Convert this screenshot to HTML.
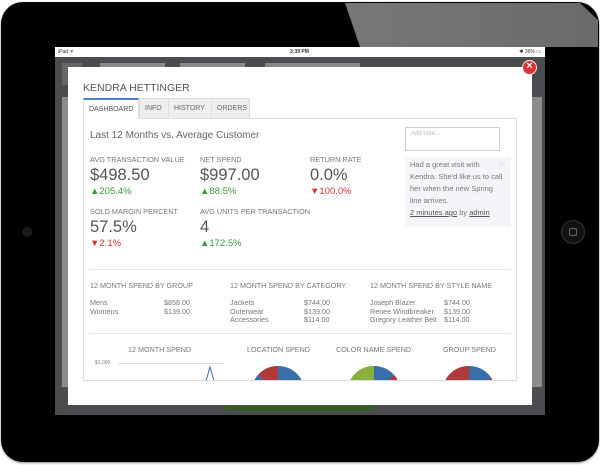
<!DOCTYPE html><html><head><style>
*{margin:0;padding:0;box-sizing:border-box}
body{width:600px;height:465px;background:#fff;position:relative;overflow:hidden;font-family:"Liberation Sans",sans-serif;color:#555}
.a{position:absolute;white-space:nowrap}
.lbl{font-size:7.3px;color:#777}
.val{font-size:16.5px;color:#555}
.up{font-size:9.5px;color:#3a9a3a}
.dn{font-size:9.5px;color:#d33}
.sm{font-size:7.2px;color:#777;line-height:8.5px}
</style></head><body>
<div class="a" style="left:1px;top:2px;width:598px;height:460px;background:#000;border-radius:22px;box-shadow:0 1px 2px #888"></div>
<div class="a" style="left:0;top:0;width:600px;height:465px;clip-path:polygon(345px 3px,580px 3px,598px 20px,598px 47px,360px 47px)"><div style="width:600px;height:465px;background:linear-gradient(90deg,#555,#777 60%,#6a6a6a);border-radius:22px"></div></div>
<div class="a" style="left:22px;top:227px;width:10px;height:10px;border-radius:50%;background:#1a1a1a"></div>
<div class="a" style="left:561px;top:220px;width:24px;height:24px;border-radius:50%;background:#111;border:1px solid #333"><div style="margin:7px;width:8px;height:8px;border:1px solid #666;border-radius:2px"></div></div>
<div class="a" style="left:55px;top:47px;width:490px;height:368px;background:#4a4c50"></div>
<div class="a" style="left:55px;top:47px;width:490px;height:10px;background:#fff;font-size:5px;color:#333"><span class="a" style="left:3px;top:2px">iPad ᯤ</span><span class="a" style="left:235px;top:2px;font-weight:bold">3:39 PM</span><span class="a" style="right:4px;top:2px">✱ 36% ▭</span></div>
<div class="a" style="left:62px;top:63px;width:20px;height:22px;background:#666"></div>
<div class="a" style="left:100px;top:63px;width:65px;height:8px;background:#888"></div>
<div class="a" style="left:180px;top:63px;width:65px;height:8px;background:#888"></div>
<div class="a" style="left:265px;top:63px;width:95px;height:8px;background:#888"></div>
<div class="a" style="left:62px;top:97px;width:480px;height:290px;background:#8c8c8c"></div>
<div class="a" style="left:225px;top:402px;width:150px;height:9px;background:#3c5a28"></div>
<div class="a" style="left:68px;top:67px;width:464px;height:338px;background:#fff"></div>
<div class="a" style="left:522px;top:60px;width:15px;height:15px;border-radius:50%;background:#d33;border:1.5px solid #eee;color:#fff;font-size:11px;line-height:11px;text-align:center;font-weight:bold">×</div>
<div class="a" style="left:83px;top:82px;font-size:10.5px;color:#555">KENDRA HETTINGER</div>
<div class="a" style="left:83px;top:118px;width:434px;height:263px;border:1px solid #ddd;border-bottom:none"></div>
<div class="a" style="left:83px;top:98px;width:56px;height:21px;background:#fff;border:1px solid #ddd;border-top:2px solid #4a86c8;border-bottom:none;font-size:7px;padding:6px 0 0 5px;color:#555">DASHBOARD</div>
<div class="a" style="left:139px;top:98px;width:111px;height:20px;background:#eee;border:1px solid #ddd;border-bottom:none"></div>
<div class="a" style="left:145px;top:105px;font-size:7px;color:#666">INFO</div>
<div class="a" style="left:168px;top:98px;width:1px;height:20px;background:#ddd"></div>
<div class="a" style="left:174px;top:105px;font-size:7px;color:#666">HISTORY</div>
<div class="a" style="left:211px;top:98px;width:1px;height:20px;background:#ddd"></div>
<div class="a" style="left:217px;top:105px;font-size:7px;color:#666">ORDERS</div>
<div class="a" style="left:90px;top:130px;font-size:10px;color:#666">Last 12 Months vs. Average Customer</div>
<div class="a lbl" style="left:90px;top:155px">AVG TRANSACTION VALUE</div>
<div class="a lbl" style="left:200px;top:155px">NET SPEND</div>
<div class="a lbl" style="left:310px;top:155px">RETURN RATE</div>
<div class="a val" style="left:90px;top:166px">$498.50</div>
<div class="a val" style="left:200px;top:166px">$997.00</div>
<div class="a val" style="left:310px;top:166px">0.0%</div>
<div class="a up" style="left:90px;top:186px">▲205.4%</div>
<div class="a up" style="left:200px;top:186px">▲88.5%</div>
<div class="a dn" style="left:310px;top:186px">▼100.0%</div>
<div class="a lbl" style="left:90px;top:207px">SOLD MARGIN PERCENT</div>
<div class="a lbl" style="left:200px;top:207px">AVG UNITS PER TRANSACTION</div>
<div class="a val" style="left:90px;top:218px">57.5%</div>
<div class="a val" style="left:200px;top:218px">4</div>
<div class="a dn" style="left:90px;top:238px">▼2.1%</div>
<div class="a up" style="left:200px;top:238px">▲172.5%</div>
<div class="a" style="left:405px;top:127px;width:95px;height:24px;border:1px solid #ccc;font-size:6px;color:#bbb;padding:3px 5px">Add note...</div>
<div class="a" style="left:405px;top:157px;width:105px;height:70px;background:#f3f5f8;font-size:7.5px;line-height:12px;color:#777;padding:2px 4px 0 5px;white-space:normal">Had a great visit with&nbsp;&nbsp;&nbsp;&nbsp;&nbsp;&nbsp;&nbsp;&nbsp;&nbsp;&nbsp;&nbsp; Kendra. She'd like us to call her when the new Spring line arrives.<br><u style="color:#555">2 minutes ago</u> by <u style="color:#555">admin</u><span class="a" style="right:5px;top:2px;color:#ccc">☆</span></div>
<div class="a" style="left:90px;top:269px;width:420px;height:1px;background:#e4e4e4"></div>
<div class="a sm" style="left:90px;top:282px">12 MONTH SPEND BY GROUP</div>
<div class="a sm" style="left:230px;top:282px">12 MONTH SPEND BY CATEGORY</div>
<div class="a sm" style="left:370px;top:282px">12 MONTH SPEND BY STYLE NAME</div>
<div class="a sm" style="left:90px;top:299px">Mens<br>Womens</div>
<div class="a sm" style="left:164px;top:299px">$858.00<br>$139.00</div>
<div class="a sm" style="left:230px;top:299px">Jackets<br>Outerwear<br>Accessories</div>
<div class="a sm" style="left:304px;top:299px">$744.00<br>$139.00<br>$114.00</div>
<div class="a sm" style="left:370px;top:299px">Joseph Blazer<br>Renee Windbreaker<br>Gregory Leather Belt</div>
<div class="a sm" style="left:444px;top:299px">$744.00<br>$139.00<br>$114.00</div>
<div class="a" style="left:90px;top:333px;width:420px;height:1px;background:#e4e4e4"></div>
<div class="a sm" style="left:128px;top:346px">12 MONTH SPEND</div>
<div class="a sm" style="left:247px;top:346px">LOCATION SPEND</div>
<div class="a sm" style="left:336px;top:346px">COLOR NAME SPEND</div>
<div class="a sm" style="left:443px;top:346px">GROUP SPEND</div>
<div class="a" style="left:95px;top:360px;font-size:5px;color:#777">$1,000</div>
<div class="a" style="left:118px;top:363px;width:106px;height:1px;background:#ddd"></div>
<svg class="a" style="left:83px;top:360px" width="434" height="21" viewBox="0 0 434 21">
<path d="M123 21 L127 7 L131 21" fill="none" stroke="#3a6ea8" stroke-width="1"/>
<g transform="translate(195,33)"><circle r="27" fill="#3a6ea8"/><path d="M0 0 L0 -27 A27 27 0 0 0 -20 -18 Z" fill="#b03a3a"/></g>
<g transform="translate(291,33)"><circle r="27" fill="#3a6ea8"/><path d="M0 0 L0 -27 A27 27 0 0 0 -27 0 L0 0 Z" fill="#8aaf3c"/><path d="M0 0 L20 -18 A27 27 0 0 1 25 -10 Z" fill="#b03a3a"/></g>
<g transform="translate(386,33)"><circle r="27" fill="#3a6ea8"/><path d="M0 0 L0 -27 A27 27 0 0 0 -27 0 Z" fill="#b03a3a"/><path d="M0 0 L22 -15 A27 27 0 0 1 25 -10 Z" fill="#b03a3a"/></g>
</svg>
<div class="a" style="left:83px;top:380px;width:434px;height:1px;background:#ddd"></div>
</body></html>
